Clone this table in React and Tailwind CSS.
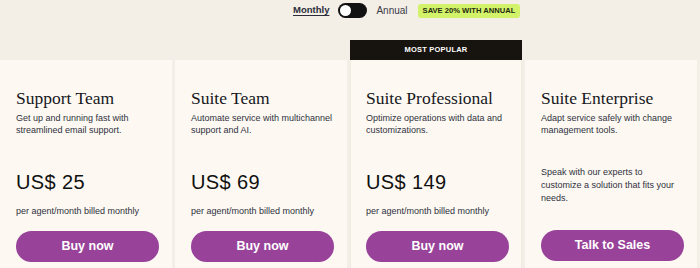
import React from "react";

const sans = { fontFamily: '"Liberation Sans", Arial, sans-serif' };

function Card({ title, desc, price, note, cta, popular, enterprise }) {
  return (
    <div className="flex flex-col w-[172px] shrink-0">
      {popular ? (
        <div className="h-[20px] bg-[#17140f] text-white text-[7.5px] font-bold flex items-center justify-center tracking-[0.2px]" style={sans}>
          MOST POPULAR
        </div>
      ) : (
        <div className="h-[20px]" />
      )}
      <div className={`flex-1 bg-[#fdf9f2] pr-[6px] pt-[27px] flex flex-col ${popular ? "border-x border-[#efe9df] pl-[15px]" : "pl-[16px]"}`}>
        <div className="text-[17.5px] leading-[22px] text-[#16171d]" style={{ fontFamily: '"Liberation Serif", "DejaVu Serif", serif' }}>
          {title}
        </div>
        <div className="mt-[3px] text-[9px] leading-[12px] text-[#2f3040] h-[26px]" style={sans}>
          {desc}
        </div>
        {enterprise ? (
          <div className="mt-[28px] w-[140px] text-[9px] leading-[13px] text-[#2f3040] h-[64px]" style={sans}>
            Speak with our experts to customize a solution that fits your needs.
          </div>
        ) : (
          <>
            <div className="mt-[33px] text-[20px] leading-[22px] text-[#111] tracking-[0.4px]" style={sans}>
              {price}
            </div>
            <div className="mt-[12px] text-[9px] leading-[12px] text-[#2f3040]" style={sans}>
              {note}
            </div>
          </>
        )}
        <button
          className={`${enterprise ? "mt-[0px]" : "mt-[14px]"} h-[31px] w-[143px] rounded-full bg-[#98429a] text-white text-[12.5px] font-bold`}
          style={sans}
        >
          {cta}
        </button>
      </div>
    </div>
  );
}

export default function App() {
  return (
    <div className="w-[700px] h-[268px] bg-[#f3eee6] overflow-hidden flex flex-col">
      <div className="h-[20px] flex items-center pl-[293px] pt-[1px]" style={sans}>
        <span className="text-[9.5px] font-bold text-[#2b2d3a] underline underline-offset-2">Monthly</span>
        <span className="ml-[9px] w-[29px] h-[15px] rounded-full bg-[#111] flex items-center pl-[2px]">
          <span className="w-[11px] h-[11px] rounded-full bg-white" />
        </span>
        <span className="ml-[9px] text-[10px] text-[#3a3c48]">Annual</span>
        <span className="ml-[10px] h-[14px] px-[5px] rounded-[3px] bg-[#d2f26a] text-[7.6px] font-bold text-[#1f2a10] flex items-center">
          SAVE 20% WITH ANNUAL
        </span>
      </div>
      <div className="h-[20px]" />
      <div className="flex-1 flex gap-[3px]">
        <Card title="Support Team" desc="Get up and running fast with streamlined email support." price="US$ 25" note="per agent/month billed monthly" cta="Buy now" />
        <Card title="Suite Team" desc="Automate service with multichannel support and AI." price="US$ 69" note="per agent/month billed monthly" cta="Buy now" />
        <Card title="Suite Professional" desc="Optimize operations with data and customizations." price="US$ 149" note="per agent/month billed monthly" cta="Buy now" popular />
        <Card title="Suite Enterprise" desc="Adapt service safely with change management tools." cta="Talk to Sales" enterprise />
      </div>
    </div>
  );
}
